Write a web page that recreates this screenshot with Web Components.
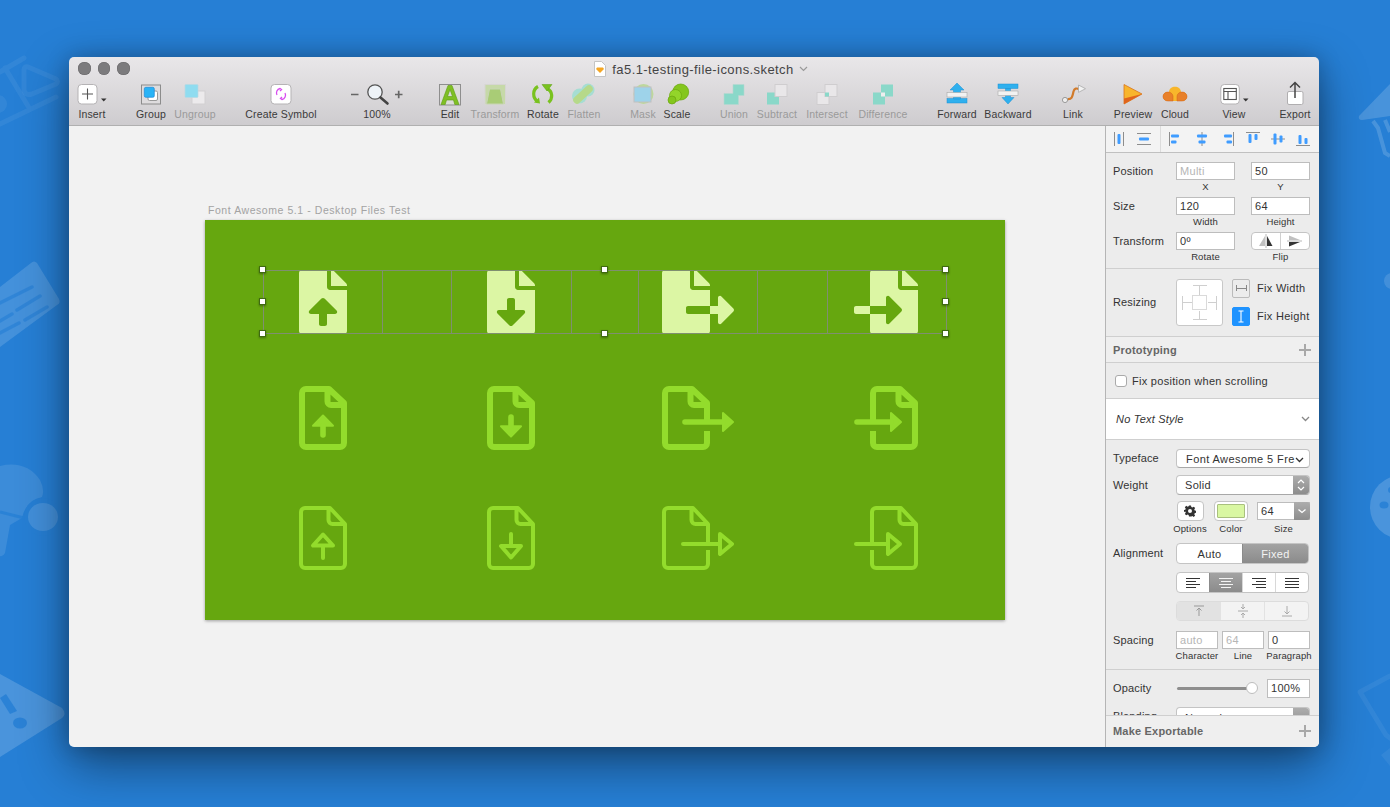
<!DOCTYPE html>
<html lang="en">
<head>
<meta charset="utf-8">
<title>fa5.1-testing-file-icons.sketch</title>
<style>
  html, body { margin: 0; padding: 0; background: #267fd5; overflow: hidden; }
</style>
</head>
<body>
<desktop-bg>
  <app-window>
    <sk-toolbar slot="bar"></sk-toolbar>
    <sk-canvas slot="canvas" label="Font Awesome 5.1 - Desktop Files Test"></sk-canvas>
    <sk-inspector slot="side"></sk-inspector>
  </app-window>
</desktop-bg>

<script>
const FONT = '"Liberation Sans", Arial, sans-serif';

// ---- wallpaper
class DesktopBg extends HTMLElement {
  constructor() {
    super();
    this.attachShadow({mode: 'open'}).innerHTML = `
    <style>
      :host { display: block; position: relative; width: 1390px; height: 807px; box-sizing: border-box;
              padding: 57px 0 0 69px; overflow: hidden; background: #267fd5; font-family: ${FONT}; }
      svg { position: absolute; left: 0; top: 0; }
      .w { position: relative; }
    </style>
    <svg width="1390" height="807" viewBox="0 0 1390 807">
      <g fill="none" stroke="#fff" stroke-opacity=".06" stroke-width="5" stroke-linecap="round" stroke-linejoin="round">
        <path d="M0 72L24 58M5 68L28 106M0 124L56 97"/>
        <path d="M24 70Q24 66 28 67L56 79Q59 82 56 84L32 94Q25 96 24 90Z"/>
      </g>
      <circle cx="-2" cy="104" r="9" fill="#fff" fill-opacity=".06"/>
      <path d="M0 287L31 263Q34 260 37 263L59 299Q61 303 57 305L0 347Z" fill="#fff" fill-opacity=".14"/>
      <g stroke="#267fd5" stroke-opacity=".65" stroke-width="3.5" stroke-linecap="round">
        <path d="M0 303L32 287M0 321L12 314M17 310L40 296M0 333L19 323M25 320L47 307"/>
      </g>
      <path d="M0 466Q26 460 40 480Q45 490 42 497Q26 500 22 518L10 525L5 553Q3 557 0 556Z" fill="#fff" fill-opacity=".1"/>
      <path d="M0 512L24 518" stroke="#267fd5" stroke-width="3" stroke-opacity=".8"/>
      <circle cx="43" cy="517" r="19" fill="#267fd5"/>
      <ellipse cx="43" cy="517" rx="15" ry="14" fill="#fff" fill-opacity=".13"/>
      <path d="M0 674L62 708Q67 714 62 718L0 757Z" fill="#fff" fill-opacity=".17"/>
      <path d="M0 698L6 694L17 711L10 714Z" fill="#267fd5" fill-opacity=".85"/>
      <ellipse cx="20" cy="723" rx="7" ry="5.5" fill="#267fd5" fill-opacity=".85"/>

      <path d="M1390 84L1359 116Q1358 120 1362 120L1390 116Z" fill="#fff" fill-opacity=".16"/>
      <path d="M1373 121L1378 128L1385 153L1390 156M1385 120L1390 132" fill="none" stroke="#fff" stroke-opacity=".16" stroke-width="4"/>
      <circle cx="1392" cy="281" r="8" fill="#fff" fill-opacity=".13"/>
      <circle cx="1402" cy="507" r="32" fill="#fff" fill-opacity=".17"/>
      <ellipse cx="1384" cy="505" rx="4.5" ry="3.5" fill="#267fd5" fill-opacity=".85"/>
      <ellipse cx="1391" cy="490" rx="3" ry="3" fill="#267fd5" fill-opacity=".85"/>
      <path d="M1390 676L1360 692L1386 735L1390 738" fill="none" stroke="#fff" stroke-opacity=".06" stroke-width="5" stroke-linecap="round" stroke-linejoin="round"/>
      <path d="M1390 748L1381 755L1390 766Z" fill="#fff" fill-opacity=".06"/>
    </svg>
    <div class="w"><slot></slot></div>`;
  }
}
customElements.define('desktop-bg', DesktopBg);

// ---- window frame
class AppWindow extends HTMLElement {
  constructor() {
    super();
    this.attachShadow({mode: 'open'}).innerHTML = `
    <style>
      :host { display: flex; flex-direction: column; width: 1250px; height: 690px; border-radius: 5px;
              overflow: hidden; box-shadow: 0 18px 50px rgba(0,0,0,.45), 0 0 22px rgba(0,0,0,.22); }
      .main { flex: 1; display: flex; min-height: 0; }
    </style>
    <slot name="bar"></slot>
    <div class="main"><slot name="canvas"></slot><slot name="side"></slot></div>`;
  }
}
customElements.define('app-window', AppWindow);

// ---- one button in the toolbar
class ToolItem extends HTMLElement {
  constructor() {
    super();
    const w = this.getAttribute('w');
    const gap = this.getAttribute('gap');
    this.attachShadow({mode: 'open'}).innerHTML = `
    <style>
      :host { display: flex; flex-direction: column; align-items: center; flex: none;
              width: ${w}px; margin-left: ${gap}px; font-size: 10.5px; letter-spacing: .15px; color: #3a3a3a; }
      :host([off]) { color: #9a9a9a; }
      .ic { height: 24px; margin-bottom: 2px; }
      .t { white-space: nowrap; line-height: 13px; }
      ::slotted(svg) { display: block; overflow: visible; }
    </style>
    <div class="ic"><slot></slot></div>
    <div class="t">${this.getAttribute('label')}</div>`;
  }
}
customElements.define('tool-item', ToolItem);

// ---- title bar + toolbar
const ICO = 'width="32" height="24" viewBox="0 0 32 24"';
const WHITEBTN = (x, w) => `<rect x="${x}" y="2.5" width="${w}" height="19.5" rx="3.5" fill="#fff" stroke="#b5b3b5"/>`;
const TEAL = '#8ad8c9';
const toolbarHtml = `
<tool-item label="Insert" w="40" gap="3"><svg ${ICO}>${WHITEBTN(2,19)}<path d="M11.5 6.5v11M6 12h11" stroke="#555" stroke-width="1.1"/><path d="M25 16.5h5.5l-2.75 3z" fill="#333"/></svg></tool-item>
<tool-item label="Group" w="40" gap="19"><svg ${ICO}><rect x="6.5" y="3" width="19" height="19" fill="#dedcde" stroke="#8c8c8c"/><rect x="13" y="9" width="9.5" height="9.5" rx="1.5" fill="#fff" stroke="#999"/><rect x="9.3" y="5.3" width="10" height="10" rx="1.5" fill="#29b3f6" stroke="#2189d8" stroke-width=".7"/></svg></tool-item>
<tool-item label="Ungroup" w="44" gap="2" off><svg ${ICO}><rect x="13" y="9" width="13" height="13" fill="#eceaec" stroke="#d2d0d2"/><rect x="6" y="2.5" width="13" height="13" rx="1" fill="#8fdcf0" stroke="#b9d8e2" stroke-width=".7"/></svg></tool-item>
<tool-item label="Create Symbol" w="76" gap="26"><svg ${ICO}>${WHITEBTN(6,20)}<g fill="none" stroke="#d84cf0" stroke-width="1.3"><path d="M12 13a4.5 4.5 0 0 1 3-6.5l1.5 1-1.5 1.5"/><path d="M20 11a4.5 4.5 0 0 1-3 6.5l-1.5-1 1.5-1.5"/></g></svg></tool-item>
<tool-item label="100%" w="60" gap="28"><svg ${ICO}><path d="M-10 12.5h7.5" stroke="#666" stroke-width="1.7"/><circle cx="14" cy="10" r="7.2" fill="#eef3f8" stroke="#555" stroke-width="1.3"/><path d="M19.5 15.5l7 6" stroke="#444" stroke-width="2.6" stroke-linecap="round"/><path d="M34 12.5h7.5M37.7 8.7v7.6" stroke="#666" stroke-width="1.7"/></svg></tool-item>
<tool-item label="Edit" w="30" gap="28"><svg ${ICO}><rect x="5.5" y="2.500" width="21" height="20.5" fill="#dcdcd8" stroke="#8e8e8e"/><path d="M14 3.500h4L25 22.500h-4.200l-1.300-4.500h-7L11.200 22.500H7zM13.500 14.500h5L16 7.500z" fill="#7fbf22" stroke="#5d9c12" stroke-width=".6" fill-rule="evenodd"/></svg></tool-item>
<tool-item label="Transform" w="52" gap="4" off><svg ${ICO}><rect x="6" y="2.5" width="20.5" height="20" fill="#c6d9a8" stroke="#d6d6d2"/><path d="M10.5 7h11l3 15h-17z" fill="#a9cc76" stroke="#c8d5b5"/></svg></tool-item>
<tool-item label="Rotate" w="36" gap="4"><svg ${ICO}><g fill="none" stroke="#79c21f" stroke-width="3.2"><path d="M11 4.5C5.5 7.5 5 15.5 11 20"/><path d="M20 6.5c6 3 6 10 1.5 14"/></g><path d="M15 2.5h10l-5 6.5z" fill="#79c21f" stroke="#5c9e14" stroke-width=".5"/><path d="M7 20.5l6 1-1-6z" fill="#79c21f"/></svg></tool-item>
<tool-item label="Flatten" w="38" gap="4" off><svg ${ICO}><circle cx="11.5" cy="14" r="7.5" fill="#a6ddd3"/><circle cx="20" cy="8" r="6.5" fill="#a6ddd3"/><path d="M9 18L21 7" stroke="#b6d98a" stroke-width="7.5" stroke-linecap="round"/></svg></tool-item>
<tool-item label="Mask" w="30" gap="25" off><svg ${ICO}><circle cx="16.5" cy="12" r="10" fill="#bdd89c"/><rect x="7" y="5" width="17" height="15" fill="#9ed3ea" stroke="#c0c0c0"/></svg></tool-item>
<tool-item label="Scale" w="30" gap="4"><svg ${ICO}><circle cx="19.7" cy="10" r="8" fill="#84c61d" stroke="#6aa60f" stroke-width=".7"/><circle cx="14.5" cy="13.5" r="6" fill="#93d52a" stroke="#6aa60f" stroke-width=".7"/><circle cx="11" cy="18" r="4" fill="#84c61d" stroke="#6aa60f" stroke-width=".7"/></svg></tool-item>
<tool-item label="Union" w="32" gap="26" off><svg ${ICO}><path d="M15 2.5h11v11h-5.5v9H6v-11h9z" fill="${TEAL}" stroke="#b5d8d0" stroke-width=".6"/></svg></tool-item>
<tool-item label="Subtract" w="44" gap="5" off><svg ${ICO}><rect x="6" y="10.5" width="12" height="12" fill="${TEAL}"/><rect x="14" y="2.5" width="12" height="12" fill="#e9e7e9" stroke="#cfcdcf"/></svg></tool-item>
<tool-item label="Intersect" w="46" gap="5" off><svg ${ICO}><rect x="6" y="10.5" width="12" height="12" fill="#e9e7e9" stroke="#cfcdcf"/><rect x="14" y="2.5" width="12" height="12" fill="#e9e7e9" stroke="#cfcdcf"/><rect x="14" y="10.5" width="4" height="4" fill="${TEAL}"/></svg></tool-item>
<tool-item label="Difference" w="54" gap="6" off><svg ${ICO}><rect x="6" y="10.5" width="12" height="12" fill="${TEAL}"/><rect x="14" y="2.5" width="12" height="12" fill="${TEAL}"/><rect x="14" y="10.5" width="4" height="4" fill="#eeeeee"/></svg></tool-item>
<tool-item label="Forward" w="42" gap="26"><svg ${ICO}><rect x="6" y="16.5" width="20" height="4.5" fill="#2fb0ee" stroke="#1f8fd2" stroke-width=".5"/><path d="M16 1l7 7h-3.5v9h-7V8H9z" fill="#2fb0ee" stroke="#1f8fd2" stroke-width=".5"/><rect x="6" y="10.5" width="20" height="4.5" fill="#f2f2f2" stroke="#a9a9a9" stroke-width=".6"/></svg></tool-item>
<tool-item label="Backward" w="50" gap="5"><svg ${ICO}><path d="M16 22l6-6.5h-3.5V6h-5v9.5H10z" fill="#2fb0ee" stroke="#1f8fd2" stroke-width=".5"/><rect x="6" y="2" width="20" height="4.5" fill="#2fb0ee" stroke="#1f8fd2" stroke-width=".5"/><rect x="6" y="9" width="20" height="4.5" fill="#f2f2f2" stroke="#a9a9a9" stroke-width=".6"/></svg></tool-item>
<tool-item label="Link" w="30" gap="25"><svg ${ICO}><path d="M10.5 17c5 .5 5-3.5 6-7.5S20 6.5 22 7" fill="none" stroke="#d17a2a" stroke-width="2.2"/><circle cx="8" cy="18" r="2.6" fill="#eee" stroke="#888" stroke-width=".8"/><path d="M21.5 3l7 3.7-7 3.7z" fill="#f2f2f2" stroke="#aaa" stroke-width=".8"/></svg></tool-item>
<tool-item label="Preview" w="40" gap="25"><svg ${ICO}><path d="M7 2.5L25 12 7 22z" fill="#f8b52c" stroke="#d9731c" stroke-width=".8"/><path d="M7 22v-5.500L25 12z" fill="#e0641c"/></svg></tool-item>
<tool-item label="Cloud" w="32" gap="6"><svg ${ICO}><path d="M9 19a4.5 4.5 0 0 1-1-9l2 0c.3-7 11.7-7 12 0l2 0a4.5 4.5 0 0 1-1 9z" fill="#f8b62b"/><path d="M14 14.500a5 4.500 0 1 0-5 4.500h5zM18 14.500a5 4.500 0 1 1 5 4.500h-5z" fill="#e8802a" stroke="#d0601a" stroke-width=".5"/></svg></tool-item>
<tool-item label="View" w="36" gap="25"><svg ${ICO}><rect x="2.8" y="2.5" width="18.5" height="19.5" rx="3.5" fill="#fff" stroke="#b5b3b5"/><rect x="5.8" y="6.5" width="12.5" height="11" fill="none" stroke="#555" stroke-width="1.1"/><path d="M5.8 9.5h12.5M10 9.5v8" stroke="#555" stroke-width="1.1"/><path d="M25 16.5h5.5l-2.75 3z" fill="#333"/></svg></tool-item>
<tool-item label="Export" w="34" gap="26"><svg ${ICO}><rect x="8.5" y="9.5" width="15.5" height="13" rx="1.5" fill="#fff" stroke="#b0aeb0"/><path d="M16 16V.5M11 5.5l5-5 5 5" fill="none" stroke="#444" stroke-width="1.5"/></svg></tool-item>`;

class SkToolbar extends HTMLElement {
  constructor() {
    super();
    this.attachShadow({mode: 'open'}).innerHTML = `
    <style>
      :host { display: block; height: 69px; box-sizing: border-box; flex: none;
              background: linear-gradient(#e9e7e9, #cecccf); border-bottom: 1px solid #b0b0b0; }
      .title { position: relative; display: flex; align-items: center; justify-content: center; height: 24px; padding-left: 14px; font-size: 13px; color: #444; letter-spacing: .42px; }
      .doc { margin: 0 6px 0 0; }
      .chev { margin-left: 5px; }
      .lights { position: absolute; left: 9px; top: 5px; display: flex; gap: 7px; }
      .lights i { width: 12.5px; height: 12.5px; border-radius: 50%; background: #7c7b7d; box-shadow: inset 0 0 0 .5px #6a696b; }
      .row { display: flex; padding-top: 1px; }
    </style>
    <div class="title">
      <div class="lights"><i></i><i></i><i></i></div>
      <svg class="doc" width="12" height="16" viewBox="0 0 12 16"><path d="M.5.5h7l4 4v11H.5z" fill="#fff" stroke="#c4c4c4"/><path d="M3 6.5h6l1 1.5-4 4-4-4z" fill="#f5a623"/></svg>
      <span>fa5.1-testing-file-icons.sketch</span>
      <svg class="chev" width="9" height="6" viewBox="0 0 9 6"><path d="M1 1l3.5 3.5L8 1" fill="none" stroke="#9a9a9a" stroke-width="1.2"/></svg>
    </div>
    <div class="row">${toolbarHtml}</div>`;
  }
}
customElements.define('sk-toolbar', SkToolbar);

// ---- the Font Awesome file icons on the artboard
const SOLID = {
  up: ['0 0 384 512', 'M224 136V0H24C10.7 0 0 10.7 0 24v464c0 13.3 10.7 24 24 24h336c13.3 0 24-10.7 24-24V160H248c-13.2 0-24-10.8-24-24zm65.18 216.01H224v80c0 8.84-7.16 16-16 16h-32c-8.84 0-16-7.16-16-16v-80H94.82c-14.28 0-21.41-17.29-11.27-27.36l96.42-95.7c6.65-6.61 17.39-6.61 24.04 0l96.42 95.7c10.15 10.07 3.03 27.36-11.25 27.36zM377 105L279.1 7c-4.5-4.5-10.6-7-17-7H256v128h128v-6.1c0-6.3-2.5-12.4-7-16.9z'],
  down: ['0 0 384 512', 'M224 136V0H24C10.7 0 0 10.7 0 24v464c0 13.3 10.7 24 24 24h336c13.3 0 24-10.7 24-24V160H248c-13.2 0-24-10.8-24-24zm76.45 211.36l-96.42 95.7c-6.65 6.61-17.39 6.61-24.04 0l-96.42-95.7C73.42 337.29 80.54 320 94.82 320H160v-80c0-8.84 7.16-16 16-16h32c8.84 0 16 7.16 16 16v80h65.18c14.28 0 21.4 17.29 11.27 27.36zM377 105L279.1 7c-4.5-4.5-10.6-7-17-7H256v128h128v-6.1c0-6.3-2.5-12.4-7-16.9z'],
  out: ['0 0 576 512', 'M384 121.9c0-6.3-2.5-12.4-7-16.9L279.1 7c-4.5-4.5-10.6-7-17-7H256v128h128zM571 308l-95.7-96.4c-10.1-10.1-27.4-3-27.4 11.3V288h-64v64h64v65.2c0 14.3 17.3 21.4 27.4 11.3L571 332c6.6-6.6 6.6-17.4 0-24zm-379 28v-32c0-8.8 7.2-16 16-16h176V160H248c-13.2 0-24-10.8-24-24V0H24C10.7 0 0 10.7 0 24v464c0 13.3 10.7 24 24 24h336c13.3 0 24-10.7 24-24V352H208c-8.8 0-16-7.2-16-16z'],
  in: ['0 0 512 512', 'M16 288c-8.8 0-16 7.2-16 16v32c0 8.8 7.2 16 16 16h112v-64H16zm336-152V0H152c-13.3 0-24 10.7-24 24v264h127.99v-65.18c0-14.28 17.29-21.41 27.36-11.27l95.7 96.43c6.6 6.65 6.6 17.39 0 24.04l-95.7 96.42c-10.06 10.14-27.36 3.03-27.36-11.27V352H128v136c0 13.3 10.7 24 24 24h336c13.3 0 24-10.7 24-24V160H376c-13.2 0-24-10.8-24-24zm153-31L407.1 7c-4.5-4.5-10.6-7-17-7H384v128h128v-6.1c0-6.3-2.5-12.4-7-16.9z']
};
const ROUND = 'stroke-linejoin="round" stroke-linecap="round"';
// [width, file outline, arrow head, arrow stem]
const OUTLINE = {
  regular: {
    sw: 6,
    up: [48, 'M3 7a4 4 0 0 1 4-4H30L45 17V57a4 4 0 0 1-4 4H7a4 4 0 0 1-4-4ZM28.5 4V15.5a3.5 3.5 0 0 0 3.5 3.5H45', 'M24 29.500L14 39.700H34Z', 'M24 40V49'],
    down: [48, 'M3 7a4 4 0 0 1 4-4H30L45 17V57a4 4 0 0 1-4 4H7a4 4 0 0 1-4-4ZM28.5 4V15.5a3.5 3.5 0 0 0 3.5 3.5H45', 'M24 50.500L14 40.300H34Z', 'M24 31V40'],
    out: [72, 'M45 36V17L30 3H7a4 4 0 0 0-4 4V57a4 4 0 0 0 4 4H41a4 4 0 0 0 4-4V45M28.5 4V15.5a3.5 3.5 0 0 0 3.5 3.5H45', 'M61 27L71 36L61 45Z', 'M23 36H61'],
    in: [64, 'M19 36V7a4 4 0 0 1 4-4H46L61 17V57a4 4 0 0 1-4 4H23a4 4 0 0 1-4-4V45M44.5 4V15.5a3.5 3.5 0 0 0 3.5 3.5H61', 'M37 27L47 36L37 45Z', 'M3 36H37']
  },
  light: {
    sw: 4,
    up: [48, 'M2 6a4 4 0 0 1 4-4H31L46 18V58a4 4 0 0 1-4 4H6a4 4 0 0 1-4-4ZM29.5 3V14a4 4 0 0 0 4 4H45', 'M24 28.500L14 39.500H34Z', 'M24 40V52'],
    down: [48, 'M2 6a4 4 0 0 1 4-4H31L46 18V58a4 4 0 0 1-4 4H6a4 4 0 0 1-4-4ZM29.5 3V14a4 4 0 0 0 4 4H45', 'M24 51.500L14 40H34Z', 'M24 28V40'],
    out: [72, 'M46 38V18L31 2H6a4 4 0 0 0-4 4V58a4 4 0 0 0 4 4H42a4 4 0 0 0 4-4V44M29.5 3V14a4 4 0 0 0 4 4H45', 'M58 28L70 38L58 48Z', 'M21 38H58'],
    in: [64, 'M18 38V6a4 4 0 0 1 4-4H47L62 18V58a4 4 0 0 1-4 4H22a4 4 0 0 1-4-4V44M45.5 3V14a4 4 0 0 0 4 4H61', 'M34 28L46 38L34 48Z', 'M2 38H34']
  }
};

class FileIcon extends HTMLElement {
  constructor() {
    super();
    const kind = this.getAttribute('kind');
    const weight = this.getAttribute('weight');
    let svg;
    if (weight === 'solid') {
      const s = SOLID[kind];
      const w = parseInt(s[0].split(' ')[2]) / 8;
      svg = `<svg width="${w}" height="64" viewBox="${s[0]}"><path fill="#dcf6a4" d="${s[1]}"/></svg>`;
    } else {
      const o = OUTLINE[weight];
      const k = o[kind];
      // the regular arrow head is filled, the light one stays open
      const head = weight === 'regular'
        ? `<path d="${k[2]}" fill="#93dc2c" stroke="#93dc2c" stroke-width="2" ${ROUND}/><path d="${k[3]}" fill="none" stroke="#93dc2c" stroke-width="5.6" ${ROUND}/>`
        : `<path d="${k[2]}" fill="none" stroke="#93dc2c" stroke-width="4" ${ROUND}/><path d="${k[3]}" fill="none" stroke="#93dc2c" stroke-width="4" ${ROUND}/>`;
      svg = `<svg width="${k[0]}" height="64" viewBox="0 0 ${k[0]} 64"><path d="${k[1]}" fill="none" stroke="#93dc2c" stroke-width="${o.sw}" stroke-linejoin="round"/>${head}</svg>`;
    }
    this.attachShadow({mode: 'open'}).innerHTML = `
    <style>:host { display: block; height: 64px; } svg { display: block; }</style>${svg}`;
  }
}
customElements.define('file-icon', FileIcon);

class SelectionBox extends HTMLElement {
  constructor() {
    super();
    const guide = [58.5, 177.5, 246.5, 366.5, 433.5, 552.5, 622.5, 741.5]
      .map(x => `<path d="M${x} 50V114"/>`).join('');
    const pts = [[58,50],[58,82],[58,114],[400,50],[400,114],[741,50],[741,82],[741,114]];
    const handles = pts.map(p => `<rect x="${p[0] - 3.5}" y="${p[1] - 3.5}" width="6" height="6" fill="#fff" stroke="#3f6a12" stroke-width="1" style="filter:drop-shadow(0 1px 1px rgba(0,0,0,.35))"/>`).join('');
    this.attachShadow({mode: 'open'}).innerHTML = `
    <style>:host { position: absolute; left: 0; top: 0; width: 800px; height: 400px; pointer-events: none; } svg { display: block; }</style>
    <svg width="800" height="400" viewBox="0 0 800 400">
      <g fill="none" stroke="#7f8f70" stroke-width="1">
        <path d="M58 50.500H742M58 113.500H742"/>${guide}
      </g>
      ${handles}
    </svg>`;
  }
}
customElements.define('selection-box', SelectionBox);

class SkCanvas extends HTMLElement {
  constructor() {
    super();
    const kinds = ['up', 'down', 'out', 'in'];
    const cell = w => kinds.map(k => `<file-icon kind="${k}" weight="${w}"></file-icon>`).join('');
    this.attachShadow({mode: 'open'}).innerHTML = `
    <style>
      :host { display: block; flex: 1; min-width: 0; background: #f2f2f2; box-sizing: border-box; padding: 77px 0 0 136px; }
      .name { font-size: 10.5px; line-height: 14px; height: 17px; padding-left: 3px; color: #a3a3a3; letter-spacing: .56px; white-space: nowrap; }
      .board { position: relative; width: 800px; height: 400px; background: #66a70f; box-shadow: 0 1px 3px rgba(0,0,0,.35);
               box-sizing: border-box; padding: 50px 0 0 94px; display: grid;
               grid-template-columns: 188px 175px 192px 64px; grid-template-rows: 116px 120px 64px; }
    </style>
    <div class="name">${this.getAttribute('label')}</div>
    <div class="board">
      ${cell('solid')}${cell('regular')}${cell('light')}
      <selection-box></selection-box>
    </div>`;
  }
}
customElements.define('sk-canvas', SkCanvas);

// ---- number box with its caption
class NumField extends HTMLElement {
  constructor() {
    super();
    const w = this.getAttribute('w') || 59;
    const dim = this.hasAttribute('dim');
    const h = this.getAttribute('h') || 18;
    this.attachShadow({mode: 'open'}).innerHTML = `
    <style>
      :host { display: block; width: ${w}px; flex: none; }
      .box { box-sizing: border-box; height: ${h}px; line-height: ${h - 2}px; background: #fff; border: 1px solid #bdbdbd;
             padding-left: 3px; font-size: 11px; letter-spacing: .3px; color: ${dim ? '#b5b5b5' : '#333'}; }
      .cap { display: flex; justify-content: center; font-size: 9.5px; letter-spacing: .12px; line-height: 12px; padding-top: 1px; color: #333; white-space: nowrap; }
    </style>
    <div class="box">${this.getAttribute('value')}</div>
    ${this.getAttribute('cap') ? `<div class="cap">${this.getAttribute('cap')}</div>` : ''}`;
  }
}
customElements.define('num-field', NumField);

// ---- align toolbar glyphs on top of the inspector
const BLUE = '#3f9cff';
const alignIcon = (lines, bars) => `<svg width="16" height="16" viewBox="0 0 16 16">
  ${lines.map(d => `<path d="${d}" stroke="#8d8d8d" stroke-width="1" fill="none"/>`).join('')}
  ${bars.map(b => `<rect x="${b[0]}" y="${b[1]}" width="${b[2]}" height="${b[3]}" rx="1" fill="${BLUE}"/>`).join('')}</svg>`;

class SkInspector extends HTMLElement {
  constructor() {
    super();
    const lines = n => Array.from({length: 4}, (_, i) => {
      const y = 3.5 + i * 3;
      const short = i % 2 === 1 && n !== 'j';
      const x0 = !short || n === 'l' ? 2 : n === 'c' ? 4 : 6;
      return `<path d="M${x0} ${y}h${short ? 10 : 14}"/>`;
    }).join('');
    const para = (n, col) => `<svg width="18" height="16" viewBox="0 0 18 16"><g stroke="${col}" stroke-width="1" fill="none">${lines(n)}</g></svg>`;
    this.attachShadow({mode: 'open'}).innerHTML = `
    <style>
      :host { display: flex; flex-direction: column; flex: none; width: 214px; box-sizing: border-box;
              background: #ececec; border-left: 1px solid #b5b5b5; font-size: 11px; color: #333; letter-spacing: .15px; }
      .scroll { flex: 1; min-height: 0; overflow: hidden; }
      .aligns { height: 27px; box-sizing: border-box; background: #f3f3f3; border-bottom: 1px solid #c0c0c0; display: flex; align-items: center; padding-left: 5px; }
      .aligns svg { display: block; flex: none; margin-right: 9.4px; }
      .aligns .s { width: 1px; height: 26px; background: #dcdcdc; margin-right: 7px; margin-left: -1.4px; flex: none; }
      .sec { border-bottom: 1px solid #cfcfcf; box-sizing: border-box; padding-left: 7px; }
      .row { display: flex; align-items: flex-start; }
      .lab { width: 63px; flex: none; line-height: 18px; white-space: nowrap; }
      .pos { height: 116px; padding-top: 9px; }
      .pos .row { height: 35px; gap: 16px; }
      .pos .lab { margin-right: -16px; }
      .flip { box-sizing: border-box; height: 18px; width: 59px; border: 1px solid #c4c4c4; border-radius: 4px; background: #fff; display: flex; }
      .flip svg { display: block; }
      .cap { display: flex; justify-content: center; font-size: 9.5px; line-height: 13px; letter-spacing: .12px; white-space: nowrap; }
      .res { height: 68px; padding-top: 10px; display: flex; }
      .res .lab { align-self: flex-start; margin-top: 16px; line-height: 14px; }
      .pin { width: 47px; height: 47px; box-sizing: border-box; background: #fff; border: 1px solid #c8c8c8; border-radius: 3px; flex: none; }
      .pin svg, .fix svg { display: block; }
      .fixes { margin-left: 9px; display: flex; flex-direction: column; gap: 9.5px; }
      .fix { display: flex; align-items: center; gap: 7px; height: 18.5px; letter-spacing: .3px; }
      .fix b { font-weight: normal; display: block; width: 18px; height: 18.5px; box-sizing: border-box; border: 1px solid #bbb; border-radius: 2px; background: #ececec; }
      .fix b.on { background: #1f93ff; border-color: #1f93ff; }
      .head { height: 26px; background: #efefef; display: flex; align-items: center; justify-content: space-between; font-weight: bold; color: #666; padding-right: 8px; border-bottom: 1px solid #cfcfcf; box-sizing: border-box; padding-left: 7px; letter-spacing: .2px; }
      .head svg { display: block; }
      .chk { height: 36px; display: flex; align-items: center; gap: 5px; padding-left: 9px; }
      .chk i { width: 12px; height: 12px; box-sizing: border-box; border: 1px solid #aaa; border-radius: 3px; background: #fff; }
      .chk span { letter-spacing: .28px; }
      .style { height: 41px; background: #fff; display: flex; align-items: center; justify-content: space-between; font-style: italic; padding: 0 9px 0 10px; letter-spacing: .2px; }
      .type { height: 230px; padding-top: 9px; }
      .sel { box-sizing: border-box; width: 134px; background: #fff; border: 1px solid #c4c4c4; border-bottom-color: #a8a8a8; border-radius: 4px; padding-left: 8px; position: relative; white-space: nowrap; overflow: hidden; display: flex; align-items: center; letter-spacing: .3px; }
      .stepper { position: absolute; right: 0; top: 0; bottom: 0; width: 16px; background: linear-gradient(#adadad, #8d8d8d); }
      .stepper svg { display: block; }
      .trio { display: flex; margin-left: 63px; height: 35px; margin-top: 6px; }
      .col { display: flex; flex-direction: column; align-items: center; }
      .pbtn { box-sizing: border-box; background: #fff; border: 1px solid #c4c4c4; border-radius: 4px; height: 20px; display: flex; align-items: center; justify-content: center; }
      .seg { display: flex; box-sizing: border-box; width: 133px; border-radius: 4px; overflow: hidden; border: 1px solid #c4c4c4; background: #fff; }
      .seg > div { flex: 1; display: flex; align-items: center; justify-content: center; border-left: 1px solid #d8d8d8; }
      .seg > div:first-child { border-left: 0; }
      .seg .on { background: linear-gradient(#a3a3a3, #8b8b8b); border-color: #8b8b8b; color: #f3f3f3; }
      .seg svg { display: block; }
      .dis { background: #f3f3f3; border-color: #dcdcdc; }
      .dis > div { border-color: #e2e2e2; }
      .dis .firstd { background: #e2e2e2; }
      .opa { height: 60px; padding-top: 9px; border-bottom: 0; }
      .track { width: 80px; height: 3px; background: #8e8e8e; border-radius: 2px; position: relative; margin: 8px 10px 0 1px; flex: none; }
      .track::after { content: ""; position: absolute; right: -1px; top: -5px; width: 12px; height: 12px; box-sizing: border-box; border-radius: 50%; background: #fff; border: 1px solid #bdbdbd; }
      .foot { flex: none; height: 32px; box-sizing: border-box; background: #efefef; border-top: 1px solid #cfcfcf; display: flex; align-items: center; justify-content: space-between; font-weight: bold; color: #666; padding: 0 8px 2px 7px; letter-spacing: .2px; }
      .foot svg { display: block; }
    </style>
    <div class="aligns">
      ${alignIcon(['M3.5 1v14', 'M12.5 1v14'], [[6.5,3,3,10]])}
      ${alignIcon(['M1 2.5h14', 'M1 13.5h14'], [[3,6.5,10,3]])}
      <span class="s"></span>
      ${alignIcon(['M1.5 1v14'], [[3,3.5,8,3],[3,9.5,5.5,3]])}
      ${alignIcon(['M8 1v14'], [[3,3.5,10,3],[4.5,9.5,7,3]])}
      ${alignIcon(['M14.5 1v14'], [[5,3.5,8,3],[7.5,9.5,5.5,3]])}
      ${alignIcon(['M1 1.5h14'], [[3.5,3,3,9],[9.5,3,3,6]])}
      ${alignIcon(['M1 8h14'], [[3.5,2.5,3,11],[9.5,4.5,3,7]])}
      ${alignIcon(['M1 14.5h14'], [[3.5,4,3,9],[9.5,7,3,6]])}
    </div>
    <div class="scroll">
      <div class="sec pos">
        <div class="row"><div class="lab">Position</div><num-field value="Multi" cap="X" dim></num-field><num-field value="50" cap="Y"></num-field></div>
        <div class="row"><div class="lab">Size</div><num-field value="120" cap="Width"></num-field><num-field value="64" cap="Height"></num-field></div>
        <div class="row"><div class="lab">Transform</div><num-field value="0º" cap="Rotate"></num-field>
          <div><div class="flip">
            <svg width="29" height="16" viewBox="0 0 29 16"><path d="M13 3L7 13h6z" fill="#c0c0c0"/><path d="M15 3l5.5 10H15z" fill="#333"/><path d="M14 1v14" stroke="#999" stroke-width=".7"/><path d="M28.5 0v16" stroke="#d0d0d0"/></svg>
            <svg width="28" height="16" viewBox="0 0 28 16"><path d="M8 2.500L19 7H8z" fill="#c0c0c0"/><path d="M8 13.500L19 9H8z" fill="#333"/><path d="M6 8h15" stroke="#999" stroke-width=".7"/></svg>
          </div><div class="cap">Flip</div></div>
        </div>
      </div>
      <div class="sec res">
        <div class="lab">Resizing</div>
        <div class="pin"><svg width="45" height="45" viewBox="0 0 45 45" fill="none" stroke="#cfcfcf" shape-rendering="crispEdges">
          <rect x="15.5" y="15.5" width="14" height="14" stroke="#dadada"/>
          <path d="M15.5 5.5h14M22.5 5.5v9M15.5 39.5h14M22.5 30.5v9M5.5 15.5v14M5.5 22.5h9M39.5 15.5v14M30.5 22.5h9"/></svg></div>
        <div class="fixes">
          <div class="fix"><b><svg width="16" height="16" viewBox="0 0 16 16"><path d="M3 5v6M13 5v6M3 8h10" stroke="#888" fill="none" shape-rendering="crispEdges"/></svg></b>Fix Width</div>
          <div class="fix"><b class="on"><svg width="16" height="17" viewBox="0 0 16 17"><path d="M5.5 3h5M5.5 14h5M8 3v11" stroke="#fff" stroke-width="1.1" fill="none"/></svg></b>Fix Height</div>
        </div>
      </div>
      <div class="head">Prototyping<svg width="12" height="12" viewBox="0 0 12 12"><path d="M6 0v12M0 6h12" stroke="#a8a8a8" stroke-width="2"/></svg></div>
      <div class="sec chk"><i></i><span>Fix position when scrolling</span></div>
      <div class="sec style">No Text Style<svg width="9" height="6" viewBox="0 0 9 6"><path d="M1 1l3.5 3.5L8 1" fill="none" stroke="#888" stroke-width="1.3"/></svg></div>
      <div class="sec type">
        <div class="row"><div class="lab" style="line-height:19px">Typeface</div>
          <div class="sel" style="height:19px;padding-left:9px"><span style="letter-spacing:.42px">Font Awesome 5 Fre</span>
            <svg style="position:absolute;right:5px;top:7px" width="9" height="6" viewBox="0 0 9 6"><path d="M1 1l3.5 3.5L8 1" fill="none" stroke="#333" stroke-width="1.3"/></svg></div></div>
        <div class="row" style="margin-top:7px"><div class="lab" style="line-height:20px">Weight</div>
          <div class="sel" style="height:20px">Solid<div class="stepper"><svg width="16" height="18" viewBox="0 0 16 18"><path d="M5 7l3-3 3 3M5 11l3 3 3-3" fill="none" stroke="#fff" stroke-width="1.2"/></svg></div></div></div>
        <div class="trio">
          <div class="col" style="width:28px"><div class="pbtn" style="width:27px"><svg width="12" height="12" viewBox="0 0 24 24"><path fill="#333" fill-rule="evenodd" d="M10 1h4l.7 3.2 2 .9 2.8-1.8 2.8 2.8-1.8 2.8.9 2 3.2.7v4l-3.2.7-.9 2 1.8 2.8-2.8 2.8-2.8-1.8-2 .9L14 23h-4l-.7-3.2-2-.9-2.8 1.8-2.8-2.8 1.8-2.8-.9-2L-.6 14v-4l3.2-.7.9-2L1.700 4.500l2.800-2.800 2.800 1.800 2-.9zM12 8a4 4 0 1 0 0 8 4 4 0 0 0 0-8z"/></svg></div><div class="cap" style="margin-top:1px">Options</div></div>
          <div class="col" style="width:34px;margin-left:10px"><div class="pbtn" style="width:34px"><span style="display:block;width:26px;height:12px;background:#d9f7a2;border:1px solid #a9c07e;border-radius:1px"></span></div><div class="cap" style="margin-top:1px">Color</div></div>
          <div class="col" style="width:53px;margin-left:9px"><div style="position:relative;width:53px;height:18px;margin-top:1px;margin-bottom:1px"><num-field value="64" w="53" h="18"></num-field><div class="stepper" style="border-radius:0 3px 3px 0"><svg width="16" height="18" viewBox="0 0 16 18"><path d="M4.500 7.500l3.500 3 3.500-3" fill="none" stroke="#fff" stroke-width="1.300"/></svg></div></div><div class="cap" style="margin-top:1px">Size</div></div>
        </div>
        <div class="row" style="margin-top:7px"><div class="lab" style="line-height:20px">Alignment</div>
          <div class="seg" style="height:21px;letter-spacing:.3px"><div>Auto</div><div class="on">Fixed</div></div></div>
        <div class="seg" style="height:21px;margin:8px 0 0 63px;width:133px">
          <div>${para('l', '#333')}</div><div class="on">${para('c', '#f3f3f3')}</div><div>${para('r', '#333')}</div><div>${para('j', '#333')}</div></div>
        <div class="seg dis" style="height:20px;margin:8px 0 0 63px;width:133px">
          <div class="firstd"><svg width="16" height="14" viewBox="0 0 16 14"><path d="M3 2h10M8 12V4M5.500 6.500L8 4l2.500 2.500" stroke="#999" fill="none"/></svg></div>
          <div><svg width="16" height="14" viewBox="0 0 16 14"><path d="M3 7h10M8 0v5M6 3l2 2 2-2M8 14V9M6 11l2-2 2 2" stroke="#aaa" fill="none"/></svg></div>
          <div><svg width="16" height="14" viewBox="0 0 16 14"><path d="M3 12h10M8 2v8M5.500 7.500L8 10l2.500-2.500" stroke="#aaa" fill="none"/></svg></div></div>
        <div class="row" style="margin-top:10px"><div class="lab">Spacing</div>
          <div style="display:flex;gap:4px">
            <num-field w="42" value="auto" cap="Character" dim></num-field>
            <num-field w="42" value="64" cap="Line" dim></num-field>
            <num-field w="42" value="0" cap="Paragraph"></num-field>
          </div></div>
      </div>
      <div class="sec opa">
        <div class="row"><div class="lab" style="line-height:19px">Opacity</div><div class="track"></div><num-field w="43" h="19" value="100%"></num-field></div>
        <div class="row" style="margin-top:9px"><div class="lab">Blending</div><div class="sel" style="height:22px">Normal<div class="stepper"></div></div></div>
      </div>
    </div>
    <div class="foot">Make Exportable<svg width="12" height="12" viewBox="0 0 12 12"><path d="M6 0v12M0 6h12" stroke="#a8a8a8" stroke-width="2"/></svg></div>`;
  }
}
customElements.define('sk-inspector', SkInspector);
</script>
</body>
</html>
